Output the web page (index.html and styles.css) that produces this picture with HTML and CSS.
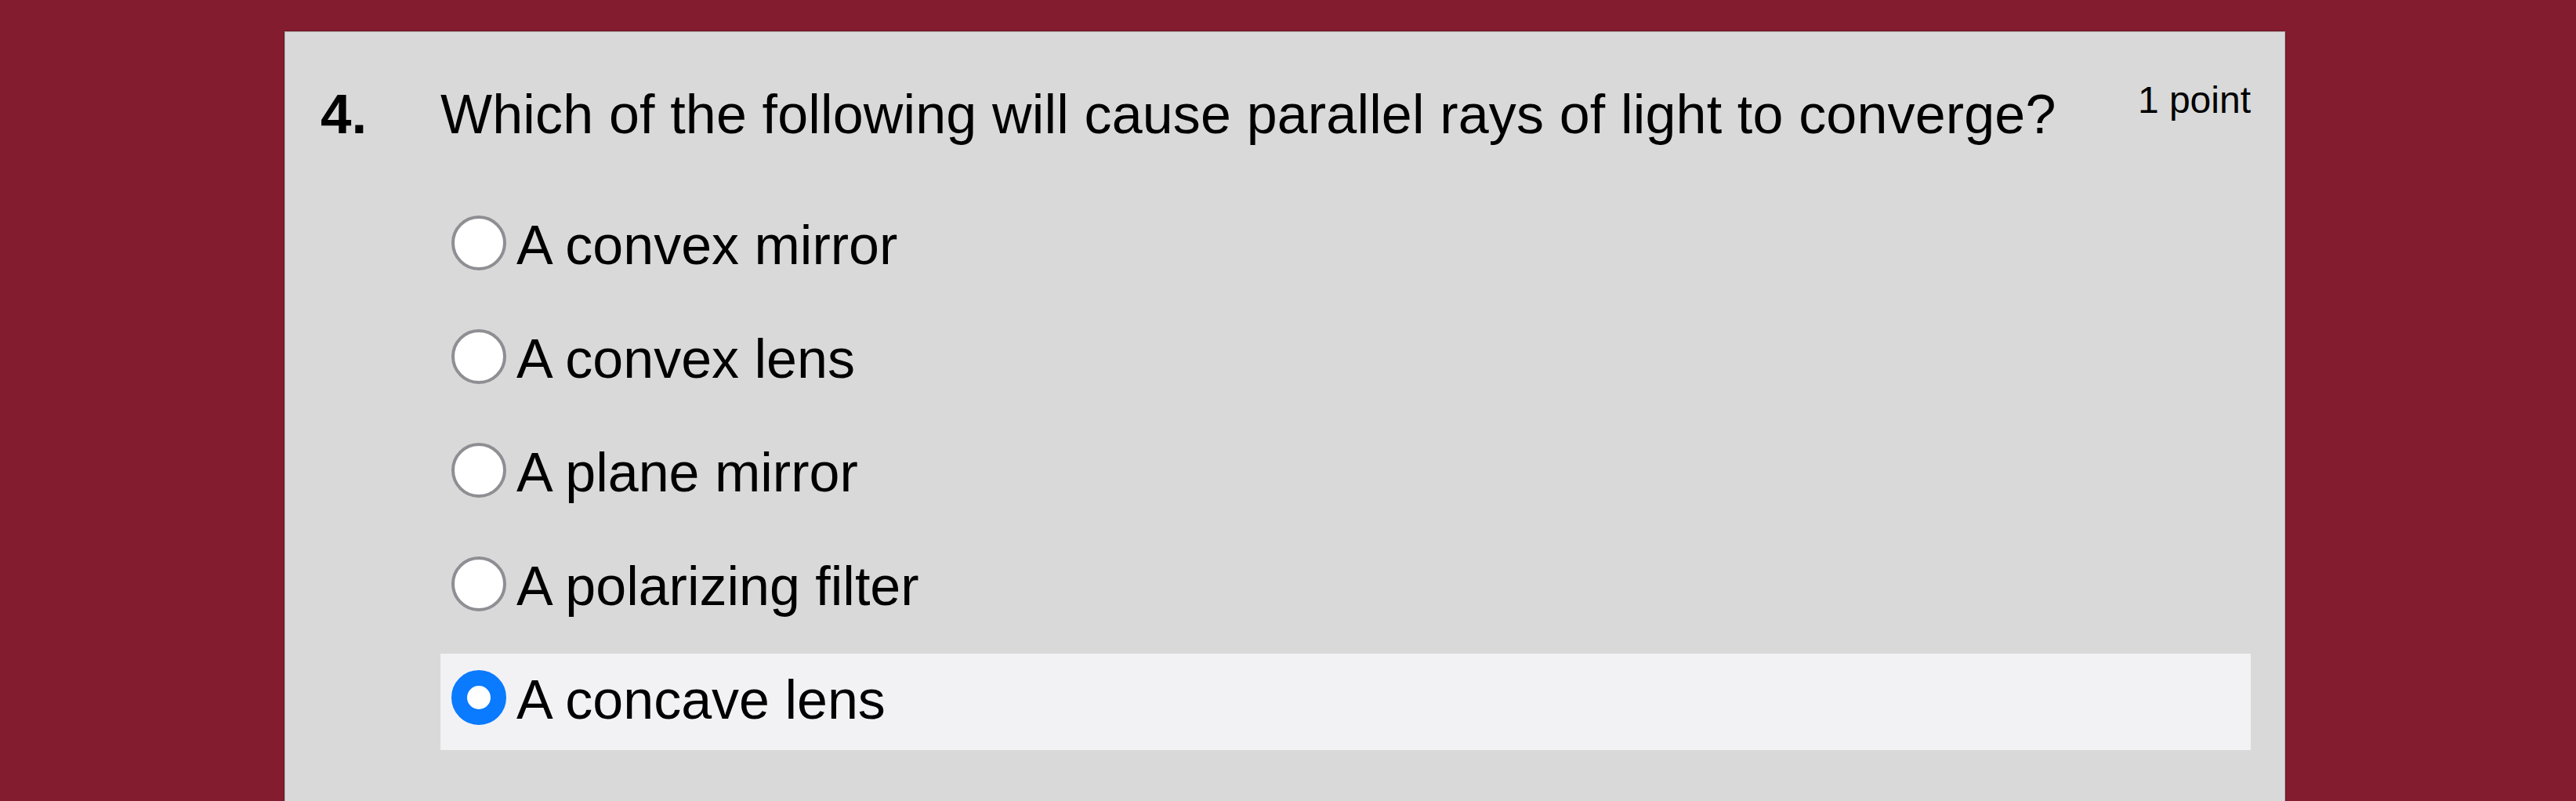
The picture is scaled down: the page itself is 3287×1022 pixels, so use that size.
FILE: index.html
```html
<!DOCTYPE html>
<html lang="en">
<head>
<meta charset="utf-8">
<title>Question 4</title>
<link rel="stylesheet" href="styles.css">
</head>
<body>
<div class="card">
  <div class="num">4.</div>
  <div class="main">
    <div class="header">
      <div class="question">Which of the following will cause parallel rays of light to converge?</div>
      <div class="points">1 point</div>
    </div>
    <div class="options">
      <div class="option"><span class="radio"></span><span class="label">A convex mirror</span></div>
      <div class="option"><span class="radio"></span><span class="label">A convex lens</span></div>
      <div class="option"><span class="radio"></span><span class="label">A plane mirror</span></div>
      <div class="option"><span class="radio"></span><span class="label">A polarizing filter</span></div>
      <div class="option selected"><span class="radio"></span><span class="label">A concave lens</span></div>
    </div>
  </div>
</div>
</body>
</html>
```

FILE: styles.css
```css
html, body {
  margin: 0;
  padding: 0;
  background: #821c2e;
  overflow: hidden;
  height: 1022px;
}

body {
  font-family: "Liberation Sans", Arial, Helvetica, sans-serif;
  color: #000;
}

.card {
  box-sizing: border-box;
  width: 2553px;
  margin: 40px 0 0 363px;
  padding: 63px 43px 200px 45px;
  background: #d9d9d9;
  border: 1px solid #b3b3b3;
  box-shadow: 0 0 2px rgba(0, 0, 0, 0.35);
  display: flex;
}

.num {
  width: 153px;
  flex: none;
  font-size: 71px;
  font-weight: bold;
  line-height: 84px;
}

.main {
  flex: 1;
  display: flex;
  flex-direction: column;
}

.header {
  display: flex;
  justify-content: space-between;
  align-items: flex-start;
}

.question {
  font-size: 70px;
  line-height: 84px;
  letter-spacing: 0.16px;
}

.points {
  font-size: 48px;
  line-height: 48px;
}

.options {
  margin-top: 66px;
  display: flex;
  flex-direction: column;
  gap: 22px;
}

.option {
  display: flex;
  align-items: flex-start;
  padding: 17px 14px 22px;
}

.option.selected {
  background: #f2f2f4;
}

.radio {
  box-sizing: border-box;
  flex: none;
  width: 70px;
  height: 70px;
  margin-top: 4px;
  margin-right: 13px;
  border-radius: 50%;
  background: #fff;
  border: 4px solid #8e8e93;
}

.option.selected .radio {
  border: 20px solid #0a7aff;
}

.label {
  font-size: 70px;
  line-height: 84px;
}
```
